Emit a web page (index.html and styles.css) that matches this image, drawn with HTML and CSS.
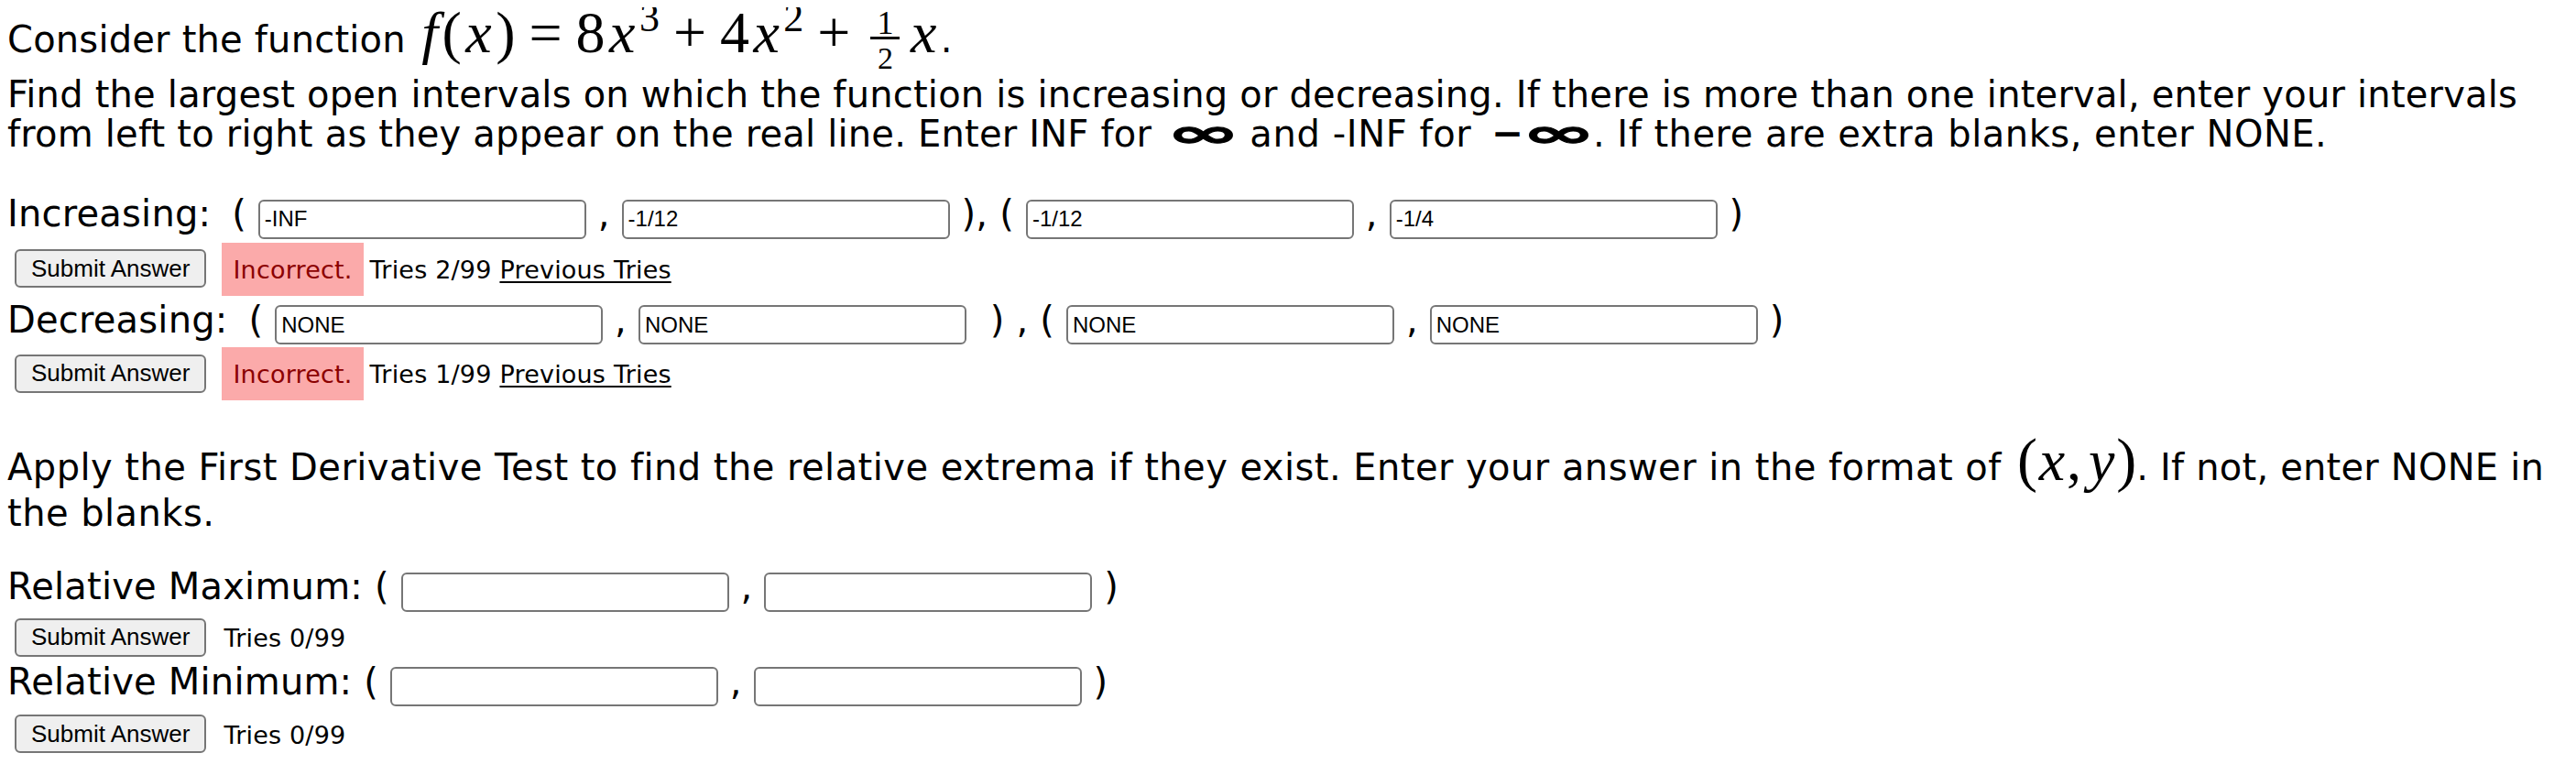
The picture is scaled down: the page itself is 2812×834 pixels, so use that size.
FILE: index.html
```html
<!DOCTYPE html>
<html>
<head>
<meta charset="utf-8">
<title>Problem</title>
<link rel="stylesheet" href="styles.css">
</head>
<body>
<div class="problem">
  <div class="line1">Consider the function <span class="math"><i>f</i>(<i>x</i>)<span class="op">=</span>8<i>x</i><span class="sup">3</span><span class="op">+</span>4<i>x</i><span class="sup">2</span><span class="op">+</span><span class="frac"><span class="num">1</span><span class="den">2</span></span><i>x</i></span>.</div>
  <p class="para">Find the largest open intervals on which the function is increasing or decreasing. If there is more than one interval, enter your intervals<br>from left to right as they appear on the real line. Enter INF for <span class="inf inf-pos">∞</span><span class="wide-a"> and -INF for </span><span class="minus">−</span><span class="inf inf-neg">∞</span><span class="wide-b">. If there are extra blanks, enter NONE.</span></p>

  <div class="ansrow row-inc">Increasing: <span class="lp">(</span> <input class="ans" type="text" value="-INF"> , <input class="ans" type="text" value="-1/12"> ), ( <input class="ans" type="text" value="-1/12"> , <input class="ans" type="text" value="-1/4"> )</div>
  <div class="subrow sub-inc"><button class="submit" type="button">Submit Answer</button><span class="badge">Incorrect.</span><span class="tries">Tries 2/99 <a class="prev" href="#">Previous Tries</a></span></div>

  <div class="ansrow row-dec">Decreasing: <span class="lp">(</span> <input class="ans" type="text" value="NONE"> , <input class="ans" type="text" value="NONE"> &nbsp;) , ( <input class="ans" type="text" value="NONE"> , <input class="ans" type="text" value="NONE"> )</div>
  <div class="subrow sub-dec"><button class="submit" type="button">Submit Answer</button><span class="badge">Incorrect.</span><span class="tries">Tries 1/99 <a class="prev" href="#">Previous Tries</a></span></div>

  <p class="para2">Apply the First Derivative Test to find the relative extrema if they exist. Enter your answer in the format of <span class="math pair"><span class="paren">(</span><i>x</i><span class="comma">,</span><i>y</i><span class="paren">)</span></span><span class="after">. If not, enter NONE in</span><br>the blanks.</p>

  <div class="ansrow row-max">Relative Maximum: ( <input class="ans" type="text" value=""> , <input class="ans" type="text" value=""> )</div>
  <div class="subrow sub-max"><button class="submit" type="button">Submit Answer</button><span class="tries plain">Tries 0/99</span></div>

  <div class="ansrow row-min">Relative Minimum: ( <input class="ans" type="text" value=""> , <input class="ans" type="text" value=""> )</div>
  <div class="subrow sub-min"><button class="submit" type="button">Submit Answer</button><span class="tries plain">Tries 0/99</span></div>
</div>
</body>
</html>
```

FILE: styles.css
```css
html, body {
  background: #ffffff;
}
body {
  margin: 8px;
  font-family: "DejaVu Sans", Verdana, sans-serif;
  font-size: 40px;
  letter-spacing: 0.2px;
  color: #000000;
}
.problem {
  white-space: nowrap;
}
.line1 {
  height: 72px;
  line-height: 60px;
  margin-top: 2px;
}
.math {
  font-family: "Liberation Serif", "Times New Roman", serif;
  font-size: 64px;
  line-height: 0;
  letter-spacing: 0;
}
.math i {
  font-style: italic;
  padding: 0 0.07em;
}
.op {
  margin: 0 15px;
}
.sup {
  font-size: 44px;
  line-height: 0;
  vertical-align: 23px;
}
.frac {
  display: inline-flex;
  flex-direction: column;
  align-items: stretch;
  vertical-align: 20px;
  margin: 0 7px;
  font-size: 36px;
  text-align: center;
}
.num {
  line-height: 30px;
  border-bottom: 3px solid #000;
  padding: 0 7px;
}
.den {
  font-size: 34px;
  line-height: 30px;
  padding-top: 6px;
}
.para {
  margin: 0;
  line-height: 43px;
}
.wide-a {
  letter-spacing: 0.6px;
}
.wide-b {
  letter-spacing: 0.5px;
}
.inf {
  display: inline-block;
  font-family: "DejaVu Sans", sans-serif;
  font-weight: bold;
  font-size: 42px;
  line-height: 0;
  letter-spacing: 0;
  -webkit-text-stroke: 1px #000;
  transform: scaleX(2.3);
  margin: 0 20px;
}
.inf-pos {
  margin-left: 26px;
}
.inf-neg {
  margin-left: 21px;
  margin-right: 20px;
}
.minus {
  font-family: "DejaVu Sans", sans-serif;
  font-weight: bold;
  font-size: 42px;
  line-height: 0;
  letter-spacing: 0;
  margin-left: 8px;
}
.ansrow {
  line-height: 43px;
}
.lp {
  margin-left: 10px;
}
.row-inc { margin-top: 44px; }
.row-dec { margin-top: 5px; }
.row-max { margin-top: 34px; }
.row-min { margin-top: 6px; }
.ans {
  box-sizing: border-box;
  width: 358px;
  height: 43px;
  margin: 0;
  padding: 0 5px;
  border: 2px solid #767676;
  border-radius: 6px;
  background: #ffffff;
  color: #000000;
  font-family: "Liberation Sans", Arial, sans-serif;
  font-size: 24px;
  letter-spacing: 0;
  vertical-align: baseline;
}
.subrow {
  font-size: 27px;
  line-height: 31px;
}
.sub-inc { margin-top: 4px; }
.sub-dec { margin-top: 3px; }
.sub-max { margin-top: 7px; }
.sub-min { margin-top: 9px; }
.submit {
  box-sizing: border-box;
  height: 42px;
  margin: 0 17px 0 8px;
  padding: 0 16px;
  border: 2px solid #767676;
  border-radius: 6px;
  background: #efefef;
  color: #000000;
  font-family: "Liberation Sans", Arial, sans-serif;
  font-size: 26px;
  letter-spacing: 0;
  vertical-align: 2px;
}
.badge {
  display: inline-block;
  padding: 14px 12px 13px;
  line-height: 31px;
  margin-right: 7px;
  background: #fbaaaa;
  color: #8b0000;
}
.tries.plain {
  margin-left: 2px;
}
.prev {
  color: #000000;
  text-decoration: underline;
  text-decoration-thickness: 2px;
  text-underline-offset: 3px;
}
.para2 {
  margin: 48px 0 0;
  line-height: 50px;
  letter-spacing: 0.45px;
}
.para2 .after {
  letter-spacing: 0.2px;
}
.pair {
  margin-left: 4px;
}
.pair i {
  padding: 0 0.03em;
}
.paren {
  font-size: 66px;
}
.comma {
  margin-right: 6px;
}
```
